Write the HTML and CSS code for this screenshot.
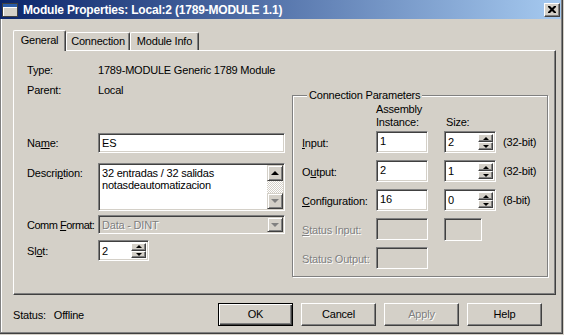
FILE: index.html
```html
<!DOCTYPE html>
<html lang="en">
<head>
    <meta charset="UTF-8">
    <title>Module Properties</title>
    <link rel="stylesheet" href="styles.css">
</head>
<body>
    <div class="window">
        <!-- Title bar -->
        <div class="titlebar">
            <svg class="app-icon" width="16" height="16" viewBox="0 0 16 16">
                <rect x="0.5" y="1.5" width="15" height="13" fill="#d4d0c8" stroke="#404040"/>
                <rect x="1" y="2" width="14" height="3" fill="#2a5caa"/>
                <rect x="1" y="5" width="14" height="1" fill="#ffffff"/>
                <rect x="1" y="6" width="1" height="8" fill="#ffffff"/>
            </svg>
            <span class="title">Module Properties: Local:2 (1789-MODULE 1.1)</span>
            <div class="close">
                <svg width="8" height="7" viewBox="0 0 8 7">
                    <path d="M0 0h2l2 2 2-2h2v1l-2.5 2.5L8 6v1H6L4 5 2 7H0V6l2.5-2.5L0 1z" fill="#000"/>
                </svg>
            </div>
        </div>

        <!-- Tabs -->
        <div class="tabs">
            <div class="tab active">General</div>
            <div class="tab tab-conn">Connection</div>
            <div class="tab tab-info">Module Info</div>
        </div>

        <div class="panel">
            <div class="form">
                <div class="row row-type">
                    <span class="label">Type:</span>
                    <span class="value">1789-MODULE Generic 1789 Module</span>
                </div>
                <div class="row row-parent">
                    <span class="label">Parent:</span>
                    <span class="value">Local</span>
                </div>
                <div class="row row-name">
                    <span class="label">Na<u>m</u>e:</span>
                    <div class="field text-field">ES</div>
                </div>
                <div class="row row-desc">
                    <span class="label">Descri<u>p</u>tion:</span>
                    <div class="field desc">
                        <div class="desc-text">32 entradas / 32 salidas<br>notasdeautomatizacion</div>
                        <div class="vscroll">
                            <span class="sbtn"><span class="arrow up"></span></span>
                            <span class="track"></span>
                            <span class="sbtn"><span class="arrow down dim"></span></span>
                        </div>
                    </div>
                </div>
                <div class="row row-comm">
                    <span class="label label-tight">Comm <u>F</u>ormat:</span>
                    <div class="field select disabled-field">
                        <span class="select-val disabled">Data - DINT</span>
                        <span class="sbtn drop"><span class="arrow down dim"></span></span>
                    </div>
                </div>
                <div class="row row-slot">
                    <span class="label">Sl<u>o</u>t:</span>
                    <div class="field spin spin-slot">
                        <span class="spin-val">2</span>
                        <span class="spin-btns">
                            <span class="sb"><span class="tri up"></span></span>
                            <span class="sb"><span class="tri down"></span></span>
                        </span>
                    </div>
                </div>
            </div>

            <fieldset class="group">
                <legend>Connection Parameters</legend>
                <div class="prow-head">
                    <span class="plabel"></span>
                    <span class="col-inst">Assembly<br>Instance:</span>
                    <span class="col-size">Size:</span>
                </div>
                <div class="prow">
                    <span class="plabel"><u>I</u>nput:</span>
                    <div class="field box">1</div>
                    <div class="field spin">
                        <span class="spin-val">2</span>
                        <span class="spin-btns">
                            <span class="sb"><span class="tri up"></span></span>
                            <span class="sb"><span class="tri down"></span></span>
                        </span>
                    </div>
                    <span class="unit">(32-bit)</span>
                </div>
                <div class="prow">
                    <span class="plabel">O<u>u</u>tput:</span>
                    <div class="field box">2</div>
                    <div class="field spin">
                        <span class="spin-val">1</span>
                        <span class="spin-btns">
                            <span class="sb"><span class="tri up"></span></span>
                            <span class="sb"><span class="tri down"></span></span>
                        </span>
                    </div>
                    <span class="unit">(32-bit)</span>
                </div>
                <div class="prow">
                    <span class="plabel"><u>C</u>onfiguration:</span>
                    <div class="field box">16</div>
                    <div class="field spin">
                        <span class="spin-val">0</span>
                        <span class="spin-btns">
                            <span class="sb"><span class="tri up"></span></span>
                            <span class="sb"><span class="tri down"></span></span>
                        </span>
                    </div>
                    <span class="unit">(8-bit)</span>
                </div>
                <div class="prow">
                    <span class="plabel disabled"><u>S</u>tatus Input:</span>
                    <div class="field box disabled-field"></div>
                    <div class="field box-small disabled-field"></div>
                </div>
                <div class="prow">
                    <span class="plabel disabled">Status Output:</span>
                    <div class="field box disabled-field"></div>
                </div>
            </fieldset>
        </div>

        <!-- Footer -->
        <div class="footer">
            <div class="status"><span>Status:</span><span class="status-val">Offline</span></div>
            <div class="buttons">
                <div class="btn default">OK</div>
                <div class="btn">Cancel</div>
                <div class="btn"><span class="disabled">Apply</span></div>
                <div class="btn">Help</div>
            </div>
        </div>
    </div>
</body>
</html>
```

FILE: styles.css
```css
/* General */
body {
    margin: 0;
    background: #d4d0c8;
    font-family: "Liberation Sans", Arial, sans-serif;
    font-size: 11px;
    letter-spacing: -0.2px;
    color: #000;
}

.window {
    width: 563px;
    height: 334px;
    box-sizing: border-box;
    border-right: 1px solid #404040;
    border-bottom: 1px solid #404040;
    box-shadow: inset -1px -1px #808080, inset 1px 0 #808080, inset 2px 0 #fff;
    display: flex;
    flex-direction: column;
}

/* Title bar */
.titlebar {
    height: 19px;
    margin-right: 1px;
    padding: 0 1px 0 2px;
    background: linear-gradient(to right, #0a246a, #a6caf0);
    display: flex;
    align-items: center;
}

.app-icon {
    margin-right: 5px;
    flex: none;
}

.title {
    flex: 1;
    color: #fff;
    font-weight: bold;
    font-size: 12px;
    white-space: nowrap;
}

.close {
    width: 16px;
    height: 14px;
    box-sizing: border-box;
    background: #d4d0c8;
    border: 1px solid;
    border-color: #fff #404040 #404040 #fff;
    box-shadow: inset -1px -1px #808080;
    display: flex;
    align-items: center;
    justify-content: center;
    padding-bottom: 1px;
}

/* Tabs */
.tabs {
    display: flex;
    align-items: flex-end;
    height: 20px;
    margin-top: 11px;
    padding-left: 13px;
}

.tab {
    height: 18px;
    box-sizing: border-box;
    border: 1px solid;
    border-bottom: none;
    border-color: #fff #404040 #404040 #fff;
    border-radius: 2px 2px 0 0;
    box-shadow: inset -1px 0 #808080;
    text-align: center;
    line-height: 17px;
    background: #d4d0c8;
}

.tab.active {
    width: 53px;
    height: 21px;
    margin-bottom: -1px;
    line-height: 19px;
    position: relative;
    z-index: 1;
}

.tab-conn {
    width: 64px;
}

.tab-info {
    width: 69px;
}

/* Panel */
.panel {
    margin-left: 13px;
    width: 543px;
    height: 245px;
    box-sizing: border-box;
    border: 1px solid;
    border-color: #fff #404040 #404040 #fff;
    box-shadow: inset -1px -1px #808080;
    display: flex;
    align-items: flex-start;
}

.form {
    width: 258px;
    padding: 11px 0 0 13px;
    display: flex;
    flex-direction: column;
}

.row {
    display: flex;
    align-items: center;
}

.label {
    width: 71px;
    flex: none;
    white-space: nowrap;
}

.label-tight {
    letter-spacing: -0.5px;
}

.value {
    white-space: nowrap;
}

.row-type,
.row-parent {
    height: 15px;
}

.row-parent { margin-top: 5px; }
.row-name { margin-top: 36px; }
.row-desc { margin-top: 10px; align-items: flex-start; }
.row-desc .label { padding-top: 4px; }
.row-comm { margin-top: 4px; }
.row-slot { margin-top: 6px; }

/* Sunken fields */
.field {
    box-sizing: border-box;
    border: 1px solid;
    border-color: #808080 #fff #fff #808080;
    box-shadow: inset 1px 1px #404040, inset -1px -1px #d4d0c8;
    background: #fff;
}

.disabled-field {
    background: #d4d0c8;
}

.disabled {
    color: #808080;
    text-shadow: 1px 1px 0 #fff;
}

.text-field {
    width: 187px;
    height: 20px;
    padding-left: 3px;
    line-height: 18px;
}

.desc {
    width: 187px;
    height: 48px;
    display: flex;
    padding: 1px;
}

.desc-text {
    flex: 1;
    padding: 2px 0 0 2px;
    line-height: 12px;
}

.vscroll {
    width: 16px;
    display: flex;
    flex-direction: column;
}

.sbtn {
    width: 16px;
    height: 16px;
    box-sizing: border-box;
    background: #d4d0c8;
    border: 1px solid;
    border-color: #d4d0c8 #404040 #404040 #d4d0c8;
    box-shadow: inset 1px 1px #fff, inset -1px -1px #808080;
    display: flex;
    align-items: center;
    justify-content: center;
    flex: none;
}

.track {
    flex: 1;
    background: repeating-conic-gradient(#fff 0 25%, #d4d0c8 0 50%) 0 0 / 2px 2px;
}

.arrow {
    width: 0;
    height: 0;
    border-left: 4px solid transparent;
    border-right: 4px solid transparent;
}

.arrow.up { border-bottom: 4px solid #000; }
.arrow.down { border-top: 4px solid #000; }
.arrow.down.dim { border-top-color: #808080; }

.select {
    width: 187px;
    height: 19px;
    display: flex;
    align-items: center;
    padding: 1px 1px 1px 3px;
}

.select-val {
    flex: 1;
}

.drop {
    height: 15px;
}

/* Spin boxes */
.spin {
    width: 52px;
    height: 22px;
    display: flex;
    padding: 2px;
}

.spin-slot {
    width: 51px;
    height: 21px;
}

.spin-val {
    flex: 1;
    padding-left: 1px;
    line-height: 16px;
}

.spin-btns {
    width: 15px;
    display: flex;
    flex-direction: column;
}

.sb {
    flex: 1;
    box-sizing: border-box;
    background: #d4d0c8;
    border: 1px solid;
    border-color: #fff #404040 #404040 #fff;
    box-shadow: inset -1px -1px #808080;
    display: flex;
    align-items: center;
    justify-content: center;
}

.tri {
    width: 0;
    height: 0;
    border-left: 3px solid transparent;
    border-right: 3px solid transparent;
}

.tri.up { border-bottom: 3px solid #000; }
.tri.down { border-top: 3px solid #000; }

/* Connection parameters group */
.group {
    margin: 38px 0 0 7px;
    width: 256px;
    box-sizing: border-box;
    padding: 1px 0 7px 9px;
    border: 1px solid #808080;
    box-shadow: inset 1px 1px #fff, 1px 1px #fff;
}

.group legend {
    margin-left: 5px;
    padding: 0 2px;
    line-height: 13px;
    background: #d4d0c8;
}

.prow-head {
    display: flex;
    align-items: flex-end;
    height: 26px;
    line-height: 13px;
}

.prow {
    display: flex;
    align-items: center;
    height: 22px;
    margin-top: 7px;
}

.prow-head + .prow {
    margin-top: 2px;
}

.plabel {
    width: 74px;
    flex: none;
    white-space: nowrap;
    padding-top: 1px;
}

.col-inst {
    width: 70px;
}

.box {
    width: 52px;
    height: 22px;
    padding-left: 3px;
    line-height: 18px;
    flex: none;
}

.box-small {
    width: 38px;
    height: 23px;
    margin-left: 16px;
}

.prow .spin {
    margin-left: 16px;
    flex: none;
}

.unit {
    margin-left: 7px;
}

/* Footer */
.footer {
    display: flex;
    align-items: center;
    margin-top: 8px;
    padding: 0 20px 0 13px;
}

.status {
    flex: 1;
    padding-top: 1px;
}

.status-val {
    margin-left: 8px;
}

.buttons {
    display: flex;
    gap: 8px;
}

.btn {
    width: 75px;
    height: 23px;
    box-sizing: border-box;
    border: 1px solid;
    border-color: #fff #404040 #404040 #fff;
    box-shadow: inset -1px -1px #808080;
    text-align: center;
    line-height: 21px;
}

.btn.default {
    border-color: #000;
    box-shadow: inset 1px 1px #fff, inset -1px -1px #404040, inset -2px -2px #808080;
}
```
